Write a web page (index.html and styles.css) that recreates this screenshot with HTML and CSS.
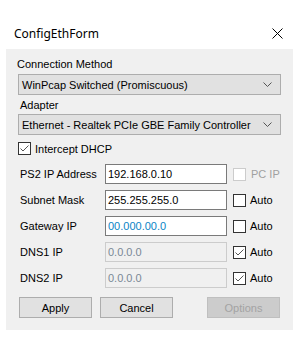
FILE: index.html
```html
<!DOCTYPE html>
<html>
<head>
<meta charset="utf-8">
<link rel="stylesheet" href="styles.css">
</head>
<body>
<div class="window">
  <div class="titlebar">
    <span class="title">ConfigEthForm</span>
    <svg class="close" width="11" height="11" viewBox="0 0 11 11"><path d="M0.5 0.5 L10.5 10.5 M10.5 0.5 L0.5 10.5" stroke="#000" stroke-width="1" fill="none"/></svg>
  </div>
  <div class="panel">
    <div class="label l1">Connection Method</div>
    <div class="combo">
      <span>WinPcap Switched (Promiscuous)</span>
      <svg class="chev" width="9" height="5" viewBox="0 0 9 5"><path d="M0.5 0.5 L4.5 4.5 L8.5 0.5" stroke="#555" stroke-width="1" fill="none"/></svg>
    </div>
    <div class="label l2">Adapter</div>
    <div class="combo c2">
      <span>Ethernet - Realtek PCIe GBE Family Controller</span>
      <svg class="chev" width="9" height="5" viewBox="0 0 9 5"><path d="M0.5 0.5 L4.5 4.5 L8.5 0.5" stroke="#555" stroke-width="1" fill="none"/></svg>
    </div>
    <div class="checkrow">
      <span class="cb checked"><svg width="11" height="11" viewBox="0 0 11 11"><path d="M1.5 5.5 L4 8 L9.5 2.5" stroke="#555" stroke-width="1" fill="none"/></svg></span>
      <span class="cbtext">Intercept DHCP</span>
    </div>
    <div class="rows">
      <div class="row">
        <span class="rlabel">PS2 IP Address</span>
        <span class="tb">192.168.0.10</span>
        <span class="cb dis"></span>
        <span class="cbtext distext">PC IP</span>
      </div>
      <div class="row">
        <span class="rlabel">Subnet Mask</span>
        <span class="tb">255.255.255.0</span>
        <span class="cb"></span>
        <span class="cbtext">Auto</span>
      </div>
      <div class="row">
        <span class="rlabel">Gateway IP</span>
        <span class="tb blue">00.000.00.0</span>
        <span class="cb"></span>
        <span class="cbtext">Auto</span>
      </div>
      <div class="row">
        <span class="rlabel">DNS1 IP</span>
        <span class="tb distb">0.0.0.0</span>
        <span class="cb checked"><svg width="11" height="11" viewBox="0 0 11 11"><path d="M1.5 5.5 L4 8 L9.5 2.5" stroke="#555" stroke-width="1" fill="none"/></svg></span>
        <span class="cbtext">Auto</span>
      </div>
      <div class="row">
        <span class="rlabel">DNS2 IP</span>
        <span class="tb distb">0.0.0.0</span>
        <span class="cb checked"><svg width="11" height="11" viewBox="0 0 11 11"><path d="M1.5 5.5 L4 8 L9.5 2.5" stroke="#555" stroke-width="1" fill="none"/></svg></span>
        <span class="cbtext">Auto</span>
      </div>
    </div>
    <div class="buttons">
      <span class="btn">Apply</span>
      <span class="btn cancel">Cancel</span>
      <span class="btn disbtn">Options</span>
    </div>
  </div>
</div>
</body>
</html>
```
FILE: styles.css
```css
html, body {
  margin: 0;
  padding: 0;
  background: #ffffff;
}
body {
  width: 300px;
  height: 350px;
  font-family: "Liberation Sans", Arial, sans-serif;
  font-size: 11px;
  color: #000;
}
.window {
  width: 300px;
  height: 350px;
}
.titlebar {
  height: 49px;
  box-sizing: border-box;
  padding: 25px 0 0 14px;
  display: flex;
  align-items: flex-start;
}
.title {
  font-family: "Noto Sans", "Open Sans", sans-serif;
  font-size: 12px;
  line-height: 18px;
  color: #000;
}
.close {
  margin-left: auto;
  margin-right: 17px;
  margin-top: 3px;
}
.panel {
  margin-left: 6px;
  width: 287px;
  height: 281px;
  background: #f0f0f0;
  box-sizing: border-box;
  padding-top: 8px;
  display: flex;
  flex-direction: column;
}
.label {
  height: 14px;
  line-height: 14px;
}
.l1 { margin-left: 11px; }
.l2 { margin-left: 14px; margin-top: 3px; }
.combo {
  margin-left: 12px;
  margin-top: 3px;
  width: 263px;
  height: 21px;
  box-sizing: border-box;
  background: #e1e1e1;
  border: 1px solid #adadad;
  display: flex;
  align-items: center;
  padding-left: 3px;
}
.combo.c2 { margin-top: 2px; }
.chev {
  margin-left: auto;
  margin-right: 8px;
}
.checkrow {
  margin-top: 7px;
  margin-left: 12px;
  height: 13px;
  display: flex;
  align-items: center;
}
.cb {
  width: 13px;
  height: 13px;
  box-sizing: border-box;
  border: 1px solid #333333;
  background: #ffffff;
  display: flex;
  flex-shrink: 0;
}
.cb.dis {
  border-color: #cccccc;
}
.cbtext {
  margin-left: 4px;
  line-height: 14px;
}
.distext {
  color: #a0a0a0;
  margin-left: 5px;
}
.rows {
  margin-top: 9px;
  display: flex;
  flex-direction: column;
  gap: 6px;
}
.row {
  height: 20px;
  display: flex;
  align-items: center;
}
.rlabel {
  margin-left: 14px;
  width: 85px;
}
.tb {
  width: 122px;
  height: 20px;
  box-sizing: border-box;
  border: 1px solid #7a7a7a;
  background: #fff;
  padding-left: 2px;
  line-height: 18px;
  margin-right: 6px;
}
.tb.blue {
  color: #0a84c6;
}
.tb.distb {
  background: #f0f0f0;
  border-color: #cccccc;
  color: #7a8896;
}
.buttons {
  margin-top: 9px;
  display: flex;
  height: 21px;
  padding-left: 13px;
}
.btn {
  width: 73px;
  height: 21px;
  box-sizing: border-box;
  border: 1px solid #adadad;
  background: #e1e1e1;
  display: flex;
  align-items: center;
  justify-content: center;
}
.btn.cancel { margin-left: 8px; }
.btn.disbtn {
  margin-left: 34px;
  background: #cccccc;
  border-color: #bfbfbf;
  color: #a3a3a3;
}
```
